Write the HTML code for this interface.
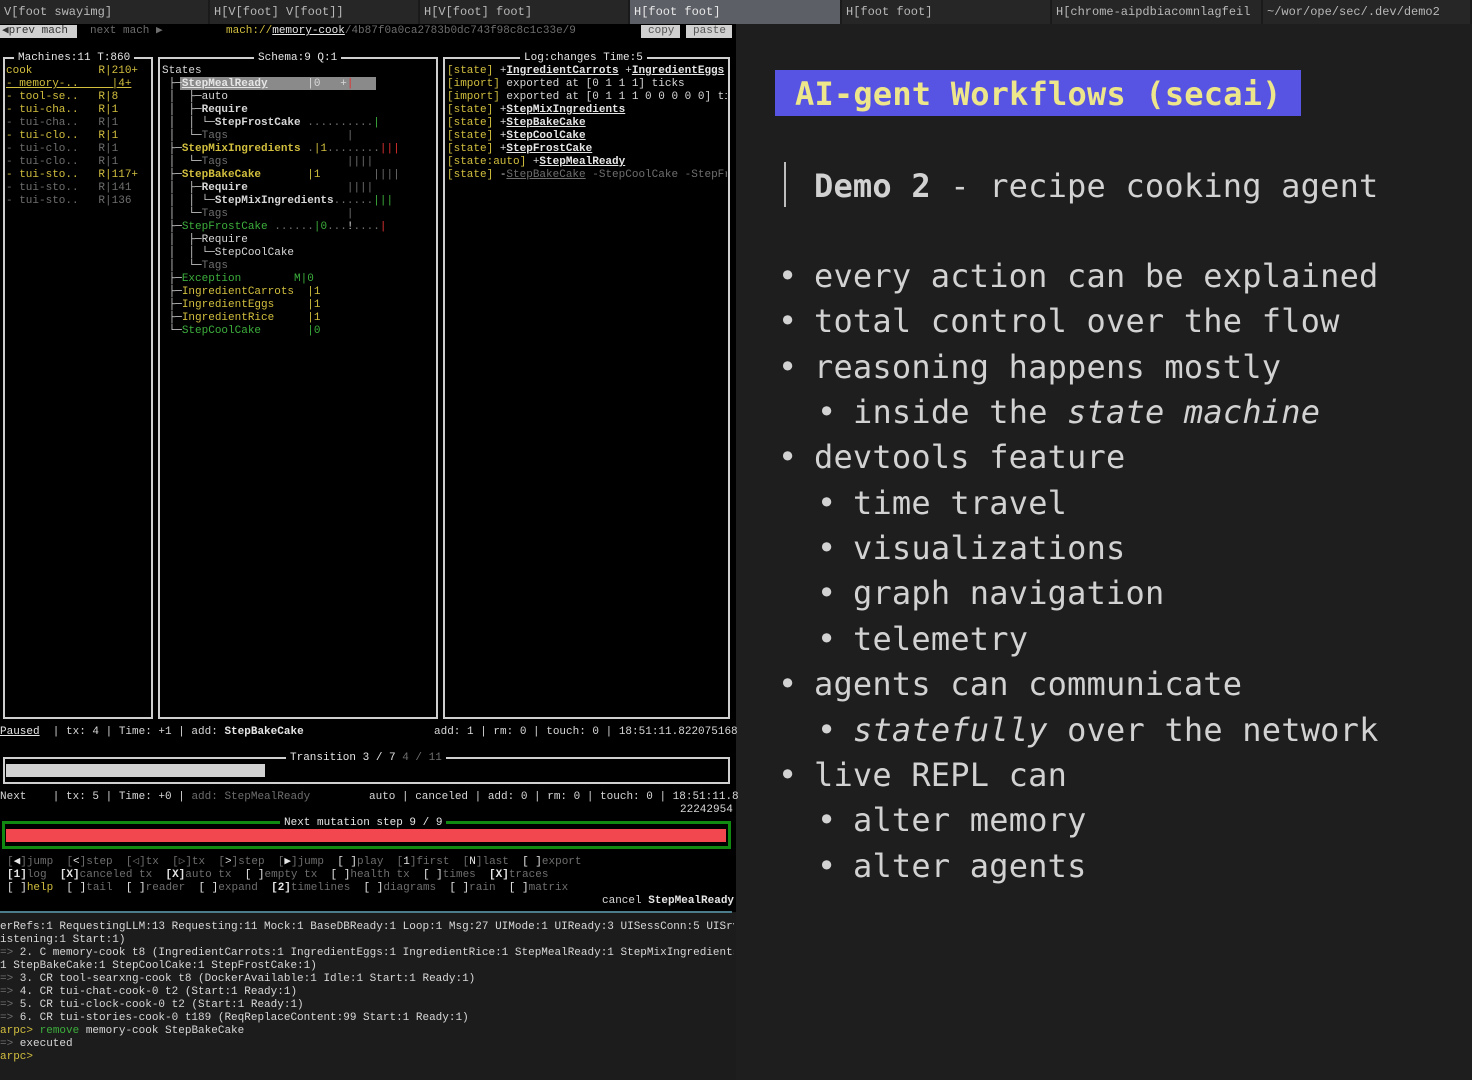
<!DOCTYPE html>
<html><head><meta charset="utf-8"><style>
*{margin:0;padding:0;box-sizing:border-box}
body{width:1472px;height:1080px;background:#1e1e1e;position:relative;overflow:hidden;font-family:"Liberation Mono",monospace}
.t{position:absolute;white-space:pre;font:11px/13px "Liberation Mono",monospace;color:#d8d8d8;margin-top:2px}
.y{color:#d2bf3e}.g{color:#3cae3c}.d{color:#6e6e6e}.w{color:#e6e6e6}.b{font-weight:bold}.u{text-decoration:underline}.r{color:#e03030}
.box{position:absolute;border:2px solid #cfcfcf}
.tab{position:absolute;top:0;height:24px;background:#262626;color:#b8b8b8;font:12px/24px "Liberation Mono",monospace;padding-left:4px;white-space:pre;overflow:hidden;border-right:2px solid #1a1a1a}
.s{position:absolute;font:32px/40px "DejaVu Sans Mono",monospace;color:#d2d2d2;white-space:pre;letter-spacing:0.2px}
</style></head><body>
<div style="position:absolute;left:0;top:24px;width:736px;height:888px;background:#000"></div>
<div style="position:absolute;left:0;top:912px;width:736px;height:168px;background:#1c1c1c"></div>
<div style="position:absolute;left:0;top:911px;width:732px;height:2px;background:#4b7d8c"></div>

<div class="tab" style="left:0;width:210px">V[foot swayimg]</div>
<div class="tab" style="left:210px;width:210px">H[V[foot] V[foot]]</div>
<div class="tab" style="left:420px;width:210px">H[V[foot] foot]</div>
<div class="tab" style="left:630px;width:212px;background:#5c5f66;color:#e8e8e8">H[foot foot]</div>
<div class="tab" style="left:842px;width:210px">H[foot foot]</div>
<div class="tab" style="left:1052px;width:211px">H[chrome-aipdbiacomnlagfeil</div>
<div class="tab" style="left:1263px;width:209px">~/wor/ope/sec/.dev/demo2</div>

<div style="position:absolute;left:0;top:25px;width:77px;height:13px;background:#d0d0d0"></div>
<div class="t" style="left:2px;top:23px;color:#333">◀prev mach</div>
<div class="t d" style="left:90px;top:23px">next mach ▶</div>
<div class="t" style="left:226px;top:23px"><span class="y">mach://</span><span class="w u">memory-cook</span><span class="d">/4b87f0a0ca2783b0dc743f98c8c1c33e/9</span></div>
<div style="position:absolute;left:641px;top:25px;width:39px;height:13px;background:#d0d0d0"></div>
<div style="position:absolute;left:686px;top:25px;width:46px;height:13px;background:#d0d0d0"></div>
<div class="t" style="left:648px;top:23px;color:#555">copy</div>
<div class="t" style="left:693px;top:23px;color:#555">paste</div>

<div class="box" style="left:3px;top:57px;width:150px;height:662px"></div>
<div class="box" style="left:158px;top:57px;width:280px;height:662px"></div>
<div class="box" style="left:443px;top:57px;width:287px;height:662px"></div>
<div class="t w" style="left:14px;top:50px;background:#000;padding:0 4px">Machines:11 T:860</div>
<div class="t w" style="left:254px;top:50px;background:#000;padding:0 4px">Schema:9 Q:1</div>
<div class="t w" style="left:520px;top:50px;background:#000;padding:0 4px">Log:changes Time:5</div>

<div class="t" style="left:6px;top:63px"><span class="y">cook          R|210+</span>
<span class="y u">- memory-..     |4+</span>
<span class="y">- tool-se..   R|8</span>
<span class="y">- tui-cha..   R|1</span>
<span class="d">- tui-cha..   R|1</span>
<span class="y">- tui-clo..   R|1</span>
<span class="d">- tui-clo..   R|1
- tui-clo..   R|1</span>
<span class="y">- tui-sto..   R|117+</span>
<span class="d">- tui-sto..   R|141
- tui-sto..   R|136</span></div>

<div style="position:absolute;left:180px;top:77px;width:196px;height:13px;background:#8a8a8a"></div>
<div class="t" style="left:162px;top:63px">States
 ├─<span class="w b u">StepMealReady</span>      |0   +<span class="r">|</span>
 │  ├─auto
 │  ├─<span class="b">Require</span>
 │  │ └─<span class="b">StepFrostCake</span> <span class="d">..........</span><span class="g">|</span>
 │  └─<span class="d">Tags</span>                  <span class="d">|</span>
 ├─<span class="y b">StepMixIngredients</span> <span class="d">.</span><span class="y">|1</span><span class="d">........</span><span class="r">|||</span>
 │  └─<span class="d">Tags</span>                  <span class="d">||||</span>
 ├─<span class="y b">StepBakeCake</span>       <span class="y">|1</span>        <span class="d">||||</span>
 │  ├─<span class="b">Require</span>               <span class="d">||||</span>
 │  │ └─<span class="b">StepMixIngredients</span><span class="d">......</span><span class="g">|||</span>
 │  └─<span class="d">Tags</span>                  <span class="d">|</span>
 ├─<span class="g">StepFrostCake</span> <span class="d">......</span><span class="g">|0</span><span class="d">...</span>!<span class="d">....</span><span class="r">|</span>
 │  ├─Require
 │  │ └─StepCoolCake
 │  └─<span class="d">Tags</span>
 ├─<span class="g">Exception</span>        <span class="g">M|0</span>
 ├─<span class="y">IngredientCarrots</span>  <span class="y">|1</span>
 ├─<span class="y">IngredientEggs</span>     <span class="y">|1</span>
 ├─<span class="y">IngredientRice</span>     <span class="y">|1</span>
 └─<span class="g">StepCoolCake</span>       <span class="g">|0</span></div>

<div class="t" style="left:447px;top:63px;width:280px;overflow:hidden"><span class="y">[state]</span> +<span class="w b u">IngredientCarrots</span> +<span class="w b u">IngredientEggs</span>
<span class="y">[import]</span> exported at [0 1 1 1] ticks
<span class="y">[import]</span> exported at [0 1 1 1 0 0 0 0 0] ti
<span class="y">[state]</span> +<span class="w b u">StepMixIngredients</span>
<span class="y">[state]</span> +<span class="w b u">StepBakeCake</span>
<span class="y">[state]</span> +<span class="w b u">StepCoolCake</span>
<span class="y">[state]</span> +<span class="w b u">StepFrostCake</span>
<span class="y">[state:auto]</span> +<span class="w b u">StepMealReady</span>
<span class="y">[state]</span> -<span class="d u">StepBakeCake</span> <span class="d">-StepCoolCake -StepFr</span></div>

<div class="t" style="left:0;top:724px"><span class="w u">Paused</span>  | tx: 4 | Time: +1 | add: <span class="w b">StepBakeCake</span></div>
<div class="t" style="left:434px;top:724px">add: 1 | rm: 0 | touch: 0 | 18:51:11.822075168</div>
<div class="box" style="left:3px;top:757px;width:727px;height:27px"></div>
<div class="t w" style="left:286px;top:750px;background:#000;padding:0 4px">Transition 3 / 7 <span class="d">4 / 11</span></div>
<div style="position:absolute;left:6px;top:764px;width:259px;height:13px;background:#d2d2d2"></div>
<div class="t" style="left:0;top:789px">Next    | tx: 5 | Time: +0 | <span class="d">add: StepMealReady</span></div>
<div class="t" style="left:369px;top:789px">auto | canceled | add: 0 | rm: 0 | touch: 0 | 18:51:11.8</div>
<div class="t" style="left:680px;top:802px">22242954</div>
<div style="position:absolute;left:2px;top:821px;width:729px;height:28px;border:3px solid #118a11"></div>
<div class="t w" style="left:280px;top:815px;background:#000;padding:0 4px">Next mutation step 9 / 9</div>
<div style="position:absolute;left:6px;top:829px;width:720px;height:13px;background:#f2474f"></div>
<div class="t d" style="left:7px;top:854px">[<span class="w">◀</span>]jump  [<span class="w">&lt;</span>]step  [◁]tx  [▷]tx  [<span class="w">&gt;</span>]step  [<span class="w">▶</span>]jump  <span class="w">[ ]</span>play  [<span class="w">1</span>]first  [<span class="w">N</span>]last  <span class="w">[ ]</span>export
<span class="w b">[1]</span>log  <span class="w b">[X]</span>canceled tx  <span class="w b">[X]</span>auto tx  <span class="w">[ ]</span>empty tx  <span class="w">[ ]</span>health tx  <span class="w">[ ]</span>times  <span class="w b">[X]</span>traces
<span class="w">[ ]</span><span class="y">help</span>  <span class="w">[ ]</span>tail  <span class="w">[ ]</span>reader  <span class="w">[ ]</span>expand  <span class="w b">[2]</span>timelines  <span class="w">[ ]</span>diagrams  <span class="w">[ ]</span>rain  <span class="w">[ ]</span>matrix</div>
<div class="t" style="left:602px;top:893px">cancel <span class="w b">StepMealReady</span></div>

<div class="t" style="left:0;top:919px;width:734px;overflow:hidden">erRefs:1 RequestingLLM:13 Requesting:11 Mock:1 BaseDBReady:1 Loop:1 Msg:27 UIMode:1 UIReady:3 UISessConn:5 UISrvL
istening:1 Start:1)
<span class="d">=&gt;</span> 2. C memory-cook t8 (IngredientCarrots:1 IngredientEggs:1 IngredientRice:1 StepMealReady:1 StepMixIngredients:
1 StepBakeCake:1 StepCoolCake:1 StepFrostCake:1)
<span class="d">=&gt;</span> 3. CR tool-searxng-cook t8 (DockerAvailable:1 Idle:1 Start:1 Ready:1)
<span class="d">=&gt;</span> 4. CR tui-chat-cook-0 t2 (Start:1 Ready:1)
<span class="d">=&gt;</span> 5. CR tui-clock-cook-0 t2 (Start:1 Ready:1)
<span class="d">=&gt;</span> 6. CR tui-stories-cook-0 t189 (ReqReplaceContent:99 Start:1 Ready:1)
<span class="y">arpc&gt;</span> <span class="g">remove</span> memory-cook StepBakeCake
<span class="d">=&gt;</span> executed
<span class="y">arpc&gt;</span></div>

<div style="position:absolute;left:775px;top:70px;width:526px;height:46px;background:#5753e3"></div>
<div class="s" style="left:795px;top:74px;color:#eee68a;font-weight:bold">AI-gent Workflows (secai)</div>
<div style="position:absolute;left:784px;top:162px;width:2px;height:45px;background:#bdbdbd"></div>
<div class="s" style="left:814px;top:166px"><b>Demo 2</b> - recipe cooking agent</div>

<div class="s" style="left:778px;top:256px">•<span style="position:absolute;left:36px">every action can be explained</span></div>
<div class="s" style="left:778px;top:301px">•<span style="position:absolute;left:36px">total control over the flow</span></div>
<div class="s" style="left:778px;top:347px">•<span style="position:absolute;left:36px">reasoning happens mostly</span></div>
<div class="s" style="left:817px;top:392px">•<span style="position:absolute;left:36px">inside the <i>state machine</i></span></div>
<div class="s" style="left:778px;top:437px">•<span style="position:absolute;left:36px">devtools feature</span></div>
<div class="s" style="left:817px;top:483px">•<span style="position:absolute;left:36px">time travel</span></div>
<div class="s" style="left:817px;top:528px">•<span style="position:absolute;left:36px">visualizations</span></div>
<div class="s" style="left:817px;top:573px">•<span style="position:absolute;left:36px">graph navigation</span></div>
<div class="s" style="left:817px;top:619px">•<span style="position:absolute;left:36px">telemetry</span></div>
<div class="s" style="left:778px;top:664px">•<span style="position:absolute;left:36px">agents can communicate</span></div>
<div class="s" style="left:817px;top:710px">•<span style="position:absolute;left:36px"><i>statefully</i> over the network</span></div>
<div class="s" style="left:778px;top:755px">•<span style="position:absolute;left:36px">live REPL can</span></div>
<div class="s" style="left:817px;top:800px">•<span style="position:absolute;left:36px">alter memory</span></div>
<div class="s" style="left:817px;top:846px">•<span style="position:absolute;left:36px">alter agents</span></div>
</body></html>
